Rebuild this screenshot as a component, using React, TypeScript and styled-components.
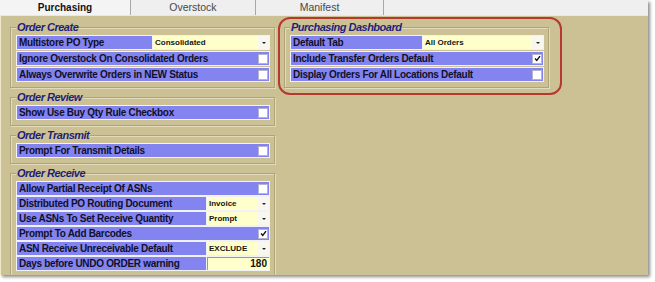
import React from "react";
import styled, { createGlobalStyle } from "styled-components";

const Global = createGlobalStyle`
  html, body { margin: 0; padding: 0; background: #ffffff; }
  body { font-family: "Liberation Sans", Arial, sans-serif; }
`;

const Page = styled.div`
  width: 655px;
  height: 282px;
  overflow: hidden;
  background: #ffffff;
`;

const Window = styled.div`
  width: 648px;
  box-shadow: 2px 2px 3px rgba(0, 0, 0, 0.45);
`;

const TabBar = styled.div`
  display: flex;
  height: 15px;
  background: #efefef;
`;

const Tab = styled.div<{ $w: number; $active?: boolean }>`
  width: ${(p) => p.$w}px;
  box-sizing: border-box;
  height: 15px;
  border-right: 1px solid #a8a8a8;
  display: flex;
  align-items: center;
  justify-content: center;
  font-size: ${(p) => (p.$active ? 10 : 10.5)}px;
  line-height: 15px;
  font-weight: ${(p) => (p.$active ? 700 : 400)};
  color: ${(p) => (p.$active ? "#111111" : "#484848")};
  background: ${(p) => (p.$active ? "#f4f4f4" : "transparent")};
`;

const Panel = styled.div`
  height: 260px;
  box-sizing: border-box;
  background: #ccc195;
  box-shadow: inset 1px 1px 0 #efe8cb;
  display: flex;
  align-items: flex-start;
  gap: 3px;
  padding: 2px 0 0 10px;
  overflow: hidden;
`;

const Column = styled.div`
  display: flex;
  flex-direction: column;
  gap: 3px;
  padding-top: 4px;
`;

const Highlight = styled.div`
  border: 2px solid #b5392e;
  border-radius: 12px;
  padding: 2px 11px 5px 4px;
`;

const Group = styled.fieldset`
  width: 265px;
  box-sizing: border-box;
  margin: 0;
  min-width: 0;
  padding: 1px 4px 5px 5px;
  border: 1px solid #aea47a;
  box-shadow: inset 1px 1px 0 #e2dabb, 1px 1px 0 #e2dabb;
`;

const Legend = styled.legend`
  padding: 0 1px;
  margin: 0;
  font-size: 11px;
  line-height: 13px;
  font-weight: 700;
  font-style: italic;
  letter-spacing: -0.5px;
  color: #1e1e7a;
  background: #ccc195;
`;

const Rows = styled.div<{ $gap: number }>`
  display: flex;
  flex-direction: column;
  gap: ${(p) => p.$gap}px;
`;

const Row = styled.div`
  display: flex;
  height: 15px;
  box-sizing: border-box;
  border: 1px solid #f1f1f8;
`;

const Label = styled.div`
  flex: 1;
  min-width: 0;
  background: #8484f0;
  padding: 0 1px 0 2px;
  display: flex;
  align-items: center;
  justify-content: space-between;
  font-size: 10px;
  line-height: 13px;
  font-weight: 700;
  letter-spacing: -0.3px;
  color: #10102a;
  white-space: nowrap;
  overflow: hidden;
`;

const CheckBox = styled.div`
  width: 10px;
  height: 10px;
  box-sizing: border-box;
  background: #ffffff;
  border: 1px solid #b4b4cc;
  display: flex;
  align-items: center;
  justify-content: center;
`;

const Select = styled.div<{ $w: number }>`
  width: ${(p) => p.$w}px;
  flex: none;
  display: flex;
  border-left: 1px solid #f1f1f8;
  background: #ffffcc;
`;

const SelectText = styled.div`
  flex: 1;
  padding-left: 2px;
  font-size: 8px;
  line-height: 13px;
  font-weight: 700;
  color: #151515;
  white-space: nowrap;
`;

const Arrow = styled.div`
  width: 11px;
  background: #f7f7ef;
  display: flex;
  align-items: center;
  justify-content: center;
  &::after {
    content: "";
    border-left: 2px solid transparent;
    border-right: 2px solid transparent;
    border-top: 2px solid #222222;
  }
`;

const NumberField = styled.div<{ $w: number }>`
  width: ${(p) => p.$w}px;
  flex: none;
  box-sizing: border-box;
  border-left: 1px solid #f1f1f8;
  background: #ffffcc;
  box-shadow: inset 1px 1px 0 #9a9a90;
  text-align: right;
  padding-right: 2px;
  font-size: 10px;
  line-height: 13px;
  font-weight: 700;
  color: #111111;
`;

const Check = () => (
  <svg width="7" height="7" viewBox="0 0 7 7">
    <path d="M1 3.5 L2.8 5.5 L6 1.2" fill="none" stroke="#111" strokeWidth="1.4" />
  </svg>
);

type Item =
  | { kind: "check"; label: string; checked?: boolean }
  | { kind: "select"; label: string; value: string; w: number }
  | { kind: "number"; label: string; value: string; w: number };

const RowView = ({ item }: { item: Item }) => {
  if (item.kind === "check") {
    return (
      <Row>
        <Label>
          <span>{item.label}</span>
          <CheckBox>{item.checked ? <Check /> : null}</CheckBox>
        </Label>
      </Row>
    );
  }
  if (item.kind === "select") {
    return (
      <Row>
        <Label>{item.label}</Label>
        <Select $w={item.w}>
          <SelectText>{item.value}</SelectText>
          <Arrow />
        </Select>
      </Row>
    );
  }
  return (
    <Row>
      <Label>{item.label}</Label>
      <NumberField $w={item.w}>{item.value}</NumberField>
    </Row>
  );
};

const GroupView = ({ title, items, gap = 1 }: { title: string; items: Item[]; gap?: number }) => (
  <Group>
    <Legend>{title}</Legend>
    <Rows $gap={gap}>
      {items.map((it) => (
        <RowView key={it.label} item={it} />
      ))}
    </Rows>
  </Group>
);

export default function App() {
  return (
    <Page>
      <Global />
      <Window>
        <TabBar>
          <Tab $w={131} $active>Purchasing</Tab>
          <Tab $w={125}>Overstock</Tab>
          <Tab $w={128}>Manifest</Tab>
        </TabBar>
        <Panel>
          <Column>
            <GroupView
              title="Order Create"
              items={[
                { kind: "select", label: "Multistore PO Type", value: "Consolidated", w: 116 },
                { kind: "check", label: "Ignore Overstock On Consolidated Orders" },
                { kind: "check", label: "Always Overwrite Orders in NEW Status" },
              ]}
            />
            <GroupView
              title="Order Review"
              items={[{ kind: "check", label: "Show Use Buy Qty Rule Checkbox" }]}
            />
            <GroupView
              title="Order Transmit"
              items={[{ kind: "check", label: "Prompt For Transmit Details" }]}
            />
            <GroupView
              title="Order Receive"
              gap={0}
              items={[
                { kind: "check", label: "Allow Partial Receipt Of ASNs" },
                { kind: "select", label: "Distributed PO Routing Document", value: "Invoice", w: 62 },
                { kind: "select", label: "Use ASNs To Set Receive Quantity", value: "Prompt", w: 62 },
                { kind: "check", label: "Prompt To Add Barcodes", checked: true },
                { kind: "select", label: "ASN Receive Unreceivable Default", value: "EXCLUDE", w: 62 },
                { kind: "number", label: "Days before UNDO ORDER warning", value: "180", w: 63 },
              ]}
            />
          </Column>
          <Highlight>
            <GroupView
              title="Purchasing Dashboard"
              items={[
                { kind: "select", label: "Default Tab", value: "All Orders", w: 120 },
                { kind: "check", label: "Include Transfer Orders Default", checked: true },
                { kind: "check", label: "Display Orders For All Locations Default" },
              ]}
            />
          </Highlight>
        </Panel>
      </Window>
    </Page>
  );
}
